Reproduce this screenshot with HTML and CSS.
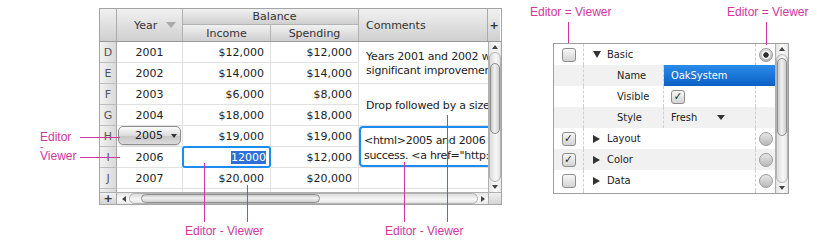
FILE: index.html
```html
<!DOCTYPE html>
<html lang="en">
  <head>
    <meta charset="UTF-8" />
    <title>Editor and Viewer</title>
    <link rel="stylesheet" href="styles.css">
  </head>
  <body>
    <div class="stage">
      <!-- Grid with grouped header -->
      <div class="grid">
        <div class="grid-head">
          <div class="hcorner"></div>
          <div class="hcell year">Year <span class="sort"></span></div>
          <div class="hgroup">
            <div class="hgroup-title">Balance</div>
            <div class="hgroup-subs">
              <div class="hsub">Income</div>
              <div class="hsub last">Spending</div>
            </div>
          </div>
          <div class="hcell comments">Comments</div>
          <div class="hcorner plus">+</div>
        </div>

        <div class="grid-main">
          <div class="cells">
            <div class="rh">D</div><div class="c mid">2001</div><div class="c num">$12,000</div><div class="c num">$12,000</div>
            <div class="c note-cell span2"><div class="wrap">Years 2001 and 2002 were<br>significant improvement</div></div>

            <div class="rh">E</div><div class="c mid">2002</div><div class="c num">$14,000</div><div class="c num">$14,000</div>

            <div class="rh">F</div><div class="c mid">2003</div><div class="c num">$6,000</div><div class="c num">$8,000</div>
            <div class="c note-cell span2"><div class="wrap">Drop followed by a sizeable</div></div>

            <div class="rh">G</div><div class="c mid">2004</div><div class="c num">$18,000</div><div class="c num">$18,000</div>

            <div class="rh">H</div>
            <div class="c combo-cell"><div class="combo">2005 <span class="combo-arrow"></span></div></div>
            <div class="c num">$19,000</div><div class="c num">$19,000</div>
            <div class="c note-cell span2 editing"><div class="editor-area">&lt;html&gt;2005 and 2006 brought<br>success. &lt;a href=&quot;http://www</div></div>

            <div class="rh">I</div><div class="c mid">2006</div>
            <div class="c edit-cell"><div class="editor-field"><span class="sel">12000</span></div></div>
            <div class="c num">$12,000</div>

            <div class="rh">J</div><div class="c mid">2007</div><div class="c num">$20,000</div><div class="c num">$20,000</div>
            <div class="c note-cell"></div>

            <div class="rh tail"></div><div class="c tail"></div><div class="c tail"></div><div class="c tail"></div><div class="c tail note-cell"></div>
          </div>
          <div class="vscroll">
            <div class="sb-btn"><span class="tri-up"></span></div>
            <div class="sb-track"><div class="sb-thumb grid-thumb"></div></div>
            <div class="sb-btn"><span class="tri-down"></span></div>
          </div>
        </div>

        <div class="grid-foot">
          <div class="fcorner plus">+</div>
          <div class="hscroll">
            <div class="sb-btn"><span class="tri-left"></span></div>
            <div class="sb-track"><div class="sb-thumb h-thumb"></div></div>
            <div class="sb-btn"><span class="tri-right"></span></div>
          </div>
          <div class="fcorner end"></div>
        </div>
      </div>

      <!-- Property table -->
      <div class="props">
        <div class="prows">
          <div class="prow">
            <div class="pchk"><span class="cb"></span></div>
            <div class="pgroup"><span class="tri-open"></span>Basic</div>
            <div class="pradio"><span class="rb on"></span></div>
          </div>
          <div class="prow alt">
            <div class="pchk"></div>
            <div class="plabel">Name</div>
            <div class="pvalue selected">OakSystem</div>
          </div>
          <div class="prow">
            <div class="pchk"></div>
            <div class="plabel">Visible</div>
            <div class="pvalue"><span class="cb checked">✓</span></div>
            <div class="pradio"></div>
          </div>
          <div class="prow alt">
            <div class="pchk"></div>
            <div class="plabel">Style</div>
            <div class="pvalue">Fresh <span class="combo-arrow dark"></span></div>
            <div class="pradio"></div>
          </div>
          <div class="prow">
            <div class="pchk"><span class="cb checked">✓</span></div>
            <div class="pgroup"><span class="tri-closed"></span>Layout</div>
            <div class="pradio"><span class="rb"></span></div>
          </div>
          <div class="prow alt">
            <div class="pchk"><span class="cb checked">✓</span></div>
            <div class="pgroup"><span class="tri-closed"></span>Color</div>
            <div class="pradio"><span class="rb"></span></div>
          </div>
          <div class="prow">
            <div class="pchk"><span class="cb"></span></div>
            <div class="pgroup"><span class="tri-closed"></span>Data</div>
            <div class="pradio"><span class="rb"></span></div>
          </div>
          <div class="prow filler">
            <div class="pchk"></div>
            <div class="pgroup"></div>
            <div class="pradio"></div>
          </div>
        </div>
        <div class="vscroll pscroll">
          <div class="sb-btn"><span class="tri-up"></span></div>
          <div class="sb-track"><div class="sb-thumb p-thumb"></div></div>
          <div class="sb-btn"><span class="tri-down"></span></div>
        </div>
      </div>

      <!-- Callouts -->
      <div class="note note-left">
        <div>Editor</div>
        <div class="dash">-</div>
        <div>Viewer</div>
      </div>
      <div class="lead-h" style="left:80px;top:137px;width:40px"></div>
      <div class="lead-h" style="left:80px;top:157px;width:40px"></div>

      <div class="note" style="left:185px;top:224px">Editor - Viewer</div>
      <div class="lead-v" style="left:204px;top:163px;height:59px"></div>
      <div class="lead-v" style="left:247px;top:185px;height:37px"></div>

      <div class="note" style="left:385px;top:224px">Editor - Viewer</div>
      <div class="lead-v" style="left:404px;top:162px;height:60px"></div>
      <div class="lead-v" style="left:447px;top:115px;height:107px"></div>

      <div class="note" style="left:530px;top:5px">Editor = Viewer</div>
      <div class="lead-v" style="left:568px;top:22px;height:21px"></div>
      <div class="note" style="left:727px;top:5px">Editor = Viewer</div>
      <div class="lead-v" style="left:766px;top:22px;height:23px"></div>
    </div>
  </body>
</html>
```

FILE: styles.css
```css
/* Page */
* {
  box-sizing: border-box;
}

body {
  margin: 0;
  background: #ffffff;
}

.stage {
  position: relative;
  width: 817px;
  height: 251px;
  display: flex;
  align-items: flex-start;
  padding: 8px 0 0 99px;
  font-family: "DejaVu Sans", sans-serif;
  font-size: 11px;
  color: #222;
}

/* Grid */
.grid {
  width: 403px;
  border: 1px solid #a4a4a4;
  background: #fff;
}

.grid-head {
  display: flex;
  height: 33px;
  border-bottom: 1px solid #9a9a9a;
  color: #333;
}

.hcorner,
.hcell,
.hsub,
.hgroup-title {
  background: linear-gradient(#f1f1f1, #cfcfcf);
}

.hcorner {
  width: 17px;
  border-right: 1px solid #aaaaaa;
}

.hcorner.plus {
  width: 13px;
  border-right: 0;
  border-left: 1px solid #aaaaaa;
  display: flex;
  align-items: center;
  justify-content: center;
  font-weight: bold;
  font-size: 11px;
  color: #333;
}

.hcell {
  display: flex;
  align-items: center;
  border-right: 1px solid #b0b0b0;
}

.hcell.year {
  width: 66px;
  padding-left: 17px;
}

.sort {
  margin-left: 9px;
  width: 0;
  height: 0;
  border-left: 5px solid transparent;
  border-right: 5px solid transparent;
  border-top: 6px solid #a9a9a9;
}

.hcell.comments {
  width: 128px;
  padding-left: 7px;
  border-right: 0;
}

.hgroup {
  width: 176px;
  display: flex;
  flex-direction: column;
  border-right: 1px solid #b0b0b0;
}

.hgroup-title {
  height: 16px;
  border-bottom: 1px solid #b4b4b4;
  display: flex;
  align-items: center;
  justify-content: center;
  padding-left: 8px;
}

.hgroup-subs {
  display: flex;
  flex: 1;
}

.hsub {
  width: 88px;
  display: flex;
  align-items: center;
  justify-content: center;
  border-right: 1px solid #b4b4b4;
}

.hsub.last {
  width: 87px;
  border-right: 0;
}

.grid-main {
  display: flex;
  height: 150px;
}

.cells {
  display: grid;
  grid-template-columns: 17px 66px 88px 88px 129px;
  grid-template-rows: repeat(7, 21px) 3px;
}

.rh {
  display: flex;
  align-items: center;
  justify-content: center;
  color: #555;
  background: linear-gradient(to right, #f2f2f2, #d9d9d9);
  border-right: 1px solid #a6a6a6;
  border-bottom: 1px solid #bdbdbd;
}

.c {
  display: flex;
  align-items: center;
  border-right: 1px solid #e1e1e1;
  border-bottom: 1px solid #e1e1e1;
  overflow: hidden;
  white-space: nowrap;
}

.c.mid {
  justify-content: center;
}

.c.num {
  justify-content: flex-end;
  padding-right: 6px;
}

.tail {
  border-bottom: 0;
}

.note-cell {
  border-right: 0;
  padding-left: 7px;
  letter-spacing: -0.2px;
}

.span2 {
  grid-row: span 2;
}

.wrap {
  line-height: 14px;
  padding-top: 2px;
}

.note-cell.editing {
  padding: 0;
  align-items: stretch;
}

.editor-area {
  width: 150px;
  flex-shrink: 0;
  border: 2px solid #1c8df0;
  border-radius: 4px;
  padding: 5px 0 0 3px;
  line-height: 15px;
  letter-spacing: -0.3px;
}

.combo-cell {
  padding: 0 1px 1px 1px;
  align-items: stretch;
}

.combo {
  flex: 1;
  display: flex;
  align-items: center;
  padding-left: 16px;
  border: 1px solid #8e8e8e;
  border-radius: 5px;
  background: linear-gradient(#fbfbfb, #dcdcdc 50%, #c6c6c6 52%, #dadada);
  box-shadow: 0 1px 1px rgba(0, 0, 0, 0.15);
}

.combo-arrow {
  margin-left: 8px;
  width: 0;
  height: 0;
  border-left: 3px solid transparent;
  border-right: 3px solid transparent;
  border-top: 4px solid #333;
}

.combo-arrow.dark {
  margin-left: 20px;
  border-left-width: 4px;
  border-right-width: 4px;
  border-top-width: 5px;
}

.edit-cell {
  border: 0;
  align-items: stretch;
  overflow: visible;
}

.editor-field {
  flex: 1;
  margin: -1px 0 0 -1px;
  border: 2px solid #1c8df0;
  border-radius: 3px;
  display: flex;
  align-items: center;
  justify-content: flex-end;
  padding-right: 3px;
  background: #fff;
}

.sel {
  background: #2f6fd8;
  color: #fff;
}

/* Scrollbars */
.vscroll {
  width: 13px;
  display: flex;
  flex-direction: column;
  border-left: 1px solid #b0b0b0;
  background: linear-gradient(to right, #e4e4e4, #fbfbfb 55%, #e8e8e8);
}

.vscroll .sb-btn {
  height: 10px;
}

.sb-btn {
  display: flex;
  align-items: center;
  justify-content: center;
  flex-shrink: 0;
}

.vscroll .sb-track {
  flex: 1;
  border: 1px solid #b3b3b3;
  border-radius: 6px;
  background: linear-gradient(to right, #dcdcdc, #f7f7f7 60%, #e4e4e4);
}

.sb-thumb {
  border: 1px solid #8f8f8f;
  border-radius: 6px;
  background: linear-gradient(to right, #c9c9c9, #f1f1f1 45%, #cfcfcf);
}

.grid-thumb {
  margin-top: 10px;
  height: 71px;
}

.p-thumb {
  margin-top: 3px;
  height: 78px;
}

.tri-up,
.tri-down,
.tri-left,
.tri-right {
  width: 0;
  height: 0;
}

.tri-up {
  border-left: 3px solid transparent;
  border-right: 3px solid transparent;
  border-bottom: 4px solid #444;
}

.tri-down {
  border-left: 3px solid transparent;
  border-right: 3px solid transparent;
  border-top: 4px solid #444;
}

.tri-left {
  border-top: 3px solid transparent;
  border-bottom: 3px solid transparent;
  border-right: 4px solid #444;
}

.tri-right {
  border-top: 3px solid transparent;
  border-bottom: 3px solid transparent;
  border-left: 4px solid #444;
}

.grid-foot {
  display: flex;
  height: 12px;
  border-top: 1px solid #b0b0b0;
}

.fcorner {
  background: linear-gradient(#f0f0f0, #d4d4d4);
}

.fcorner.plus {
  width: 17px;
  border-right: 1px solid #a6a6a6;
  display: flex;
  align-items: center;
  justify-content: center;
  font-weight: bold;
  font-size: 11px;
  line-height: 1;
  color: #333;
}

.fcorner.end {
  width: 13px;
  border-left: 1px solid #b0b0b0;
}

.hscroll {
  width: 371px;
  display: flex;
  padding-left: 2px;
  background: linear-gradient(#e4e4e4, #fbfbfb 55%, #e8e8e8);
}

.hscroll .sb-btn {
  width: 10px;
}

.hscroll .sb-track {
  flex: 1;
  display: flex;
  border: 1px solid #b3b3b3;
  border-radius: 6px;
  background: linear-gradient(#dcdcdc, #f7f7f7 60%, #e4e4e4);
}

.h-thumb {
  margin-left: 11px;
  width: 179px;
  background: linear-gradient(#c9c9c9, #f1f1f1 45%, #cfcfcf);
}

/* Property table */
.props {
  margin: 35px 0 0 51px;
  width: 236px;
  height: 151px;
  display: flex;
  border: 1px solid #9e9e9e;
  background: #fff;
  font-family: "DejaVu Sans Condensed", "DejaVu Sans", sans-serif;
  font-stretch: condensed;
  color: #222;
}

.prows {
  width: 221px;
}

.prow {
  display: flex;
  height: 21px;
}

.prow.alt {
  background: #f1f1f1;
}

.prow.filler {
  height: 2px;
}

.pchk {
  width: 30px;
  display: flex;
  align-items: center;
  justify-content: center;
  border-right: 1px dashed #cfcfcf;
}

.pgroup {
  width: 171px;
  display: flex;
  align-items: center;
  padding-left: 9px;
}

.plabel {
  width: 80px;
  display: flex;
  align-items: center;
  padding-left: 33px;
  border-right: 1px dashed #cfcfcf;
}

.pvalue {
  width: 91px;
  display: flex;
  align-items: center;
  padding-left: 7px;
}

.pvalue.selected {
  width: 111px;
  color: #fff;
  background: linear-gradient(#2a8ce9, #0b60c6);
}

.pradio {
  width: 20px;
  display: flex;
  align-items: center;
  justify-content: center;
  border-left: 1px dashed #cfcfcf;
}

.tri-open {
  margin-right: 6px;
  width: 0;
  height: 0;
  border-left: 4px solid transparent;
  border-right: 4px solid transparent;
  border-top: 7px solid #333;
}

.tri-closed {
  margin-right: 7px;
  width: 0;
  height: 0;
  border-top: 4px solid transparent;
  border-bottom: 4px solid transparent;
  border-left: 7px solid #333;
}

.cb {
  width: 14px;
  height: 14px;
  display: flex;
  align-items: center;
  justify-content: center;
  border: 1px solid #8c8c8c;
  border-radius: 3px;
  background: linear-gradient(#f7f7f7, #d3d3d3);
  font-family: "DejaVu Sans", sans-serif;
  font-size: 11px;
  line-height: 1;
  color: #222;
}

.rb {
  width: 14px;
  height: 14px;
  border-radius: 50%;
  border: 1px solid #9c9c9c;
  background: linear-gradient(#e6e6e6, #b9b9b9);
}

.rb.on {
  background: radial-gradient(circle, #2e2e2e 0 2.4px, #f2f2f2 3px 4px, rgba(242, 242, 242, 0) 4.6px),
    linear-gradient(#dedede, #b4b4b4);
}

.pscroll {
  height: 149px;
}

/* Callouts */
.note {
  position: absolute;
  font-family: "Liberation Sans", Arial, sans-serif;
  font-size: 12px;
  line-height: 14px;
  color: #d0369f;
  white-space: nowrap;
}

.note-left {
  left: 40px;
  top: 130px;
}

.note-left .dash {
  height: 5px;
  line-height: 5px;
  font-size: 10px;
}

.lead-h,
.lead-v {
  position: absolute;
  background: #d0369f;
}

.lead-h {
  height: 1px;
}

.lead-v {
  width: 1px;
}
```
